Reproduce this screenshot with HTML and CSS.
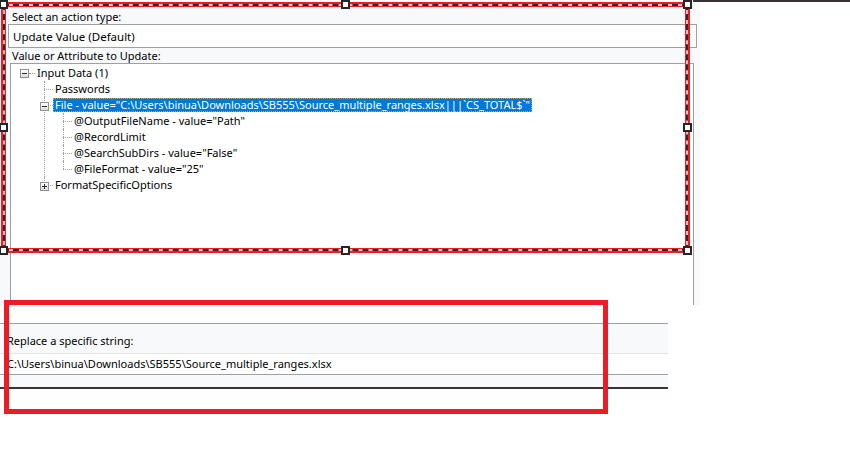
FILE: index.html
```html
<!DOCTYPE html>
<html lang="en">

<head>
    <meta charset="UTF-8">
    <meta name="viewport" content="width=device-width, initial-scale=1.0">
    <title>Update Value</title>
    <link rel="stylesheet" href="styles.css">
</head>

<body>
    <div class="strip"></div>

    <div class="panel">
        <div class="label">Select an action type:</div>
        <div class="combo">
            <span>Update Value (Default)</span>
            <svg class="combo-arrow" width="7" height="5" viewBox="0 0 7 5">
                <path d="M0.5 0.5 L3.5 3.5 L6.5 0.5" fill="none" stroke="#606060" stroke-width="1" />
            </svg>
        </div>
        <div class="label label-tree">Value or Attribute to Update:</div>
        <div class="tree">
            <div class="row root-row">
                <span class="expander minus"></span><span class="dots"></span><span class="node">Input Data (1)</span>
            </div>
            <ul class="branch level2">
                <li><span class="node">Passwords</span></li>
                <li>
                    <span class="expander minus"></span>
                    <span class="node selected">File - value="C:\Users\binua\Downloads\SB555\Source_multiple_ranges.xlsx|||`CS_TOTAL$`"</span>
                    <ul class="branch level3">
                        <li><span class="node">@OutputFileName - value="Path"</span></li>
                        <li><span class="node">@RecordLimit</span></li>
                        <li><span class="node">@SearchSubDirs - value="False"</span></li>
                        <li><span class="node">@FileFormat - value="25"</span></li>
                    </ul>
                </li>
                <li>
                    <span class="expander plus"></span>
                    <span class="node">FormatSpecificOptions</span>
                </li>
            </ul>
        </div>
    </div>

    <div class="replace">
        <div class="replace-head">Replace a specific string:</div>
        <div class="replace-value">C:\Users\binua\Downloads\SB555\Source_multiple_ranges.xlsx</div>
        <div class="replace-foot"></div>
    </div>

    <!-- marcas de anotación encima de la captura -->
    <div class="marquee"></div>
    <span class="handle" style="left: 3.5px; top: 4.5px"></span>
    <span class="handle" style="left: 345px; top: 4.5px"></span>
    <span class="handle" style="left: 687.5px; top: 4.5px"></span>
    <span class="handle" style="left: 3.5px; top: 127px"></span>
    <span class="handle" style="left: 687.5px; top: 127px"></span>
    <span class="handle" style="left: 3.5px; top: 250.5px"></span>
    <span class="handle" style="left: 345px; top: 250.5px"></span>
    <span class="handle" style="left: 687.5px; top: 250.5px"></span>
    <div class="red-box"></div>
</body>

</html>
```

FILE: styles.css
```css
body {
    margin: 0;
    background-color: #ffffff;
    font-family: "Segoe UI", "Noto Sans", sans-serif;
    font-size: 11px;
    color: #000000;
    position: relative;
    width: 850px;
    height: 474px;
    overflow: hidden;
}

.strip {
    height: 2px;
    margin-left: 693px;
    background-color: #3b3134;
}

.panel {
    width: 700px;
    height: 303px;
    box-sizing: border-box;
    padding: 8px 3px 0 8px;
    background-color: #f8f9fb;
    display: flex;
    flex-direction: column;
}

.label {
    line-height: 14px;
    padding-left: 4px;
}

.label-tree {
    line-height: 15px;
}

.combo {
    height: 24px;
    box-sizing: border-box;
    border: 1px solid #a0a0a0;
    background-color: #ffffff;
    display: flex;
    align-items: center;
    justify-content: space-between;
    padding: 0 5px 0 4px;
    font-size: 11.5px;
}

.tree {
    flex: 1;
    margin-left: 2px;
    width: 684px;
    box-sizing: border-box;
    border: 1px solid #a0a0a0;
    border-bottom: none;
    background-color: #ffffff;
    padding-top: 1px;
    line-height: 16px;
}

.row {
    display: flex;
    align-items: center;
    height: 16px;
}

.root-row .expander {
    position: relative;
    left: 0;
    top: 0;
    margin-left: 9px;
}

.dots {
    width: 6px;
    border-top: 1px dotted #a0a0a0;
}

.node {
    display: inline-block;
    vertical-align: top;
    line-height: 16px;
    padding: 0 2px;
    white-space: nowrap;
}

.node.selected {
    line-height: 14px;
    margin: 1px 0;
    background-color: #0078d7;
    color: #ffffff;
    outline: 1px dotted #f0a030;
    outline-offset: -1px;
}

.branch {
    list-style: none;
    margin: 0;
    padding: 0;
}

.level2 {
    margin-left: 33px;
}

.level3 {
    margin-left: 10px;
}

.branch li {
    position: relative;
    padding-left: 9px;
}

.branch li::before {
    content: "";
    position: absolute;
    left: 0;
    top: 0;
    bottom: 0;
    border-left: 1px dotted #a0a0a0;
}

.branch li:last-child::before {
    bottom: auto;
    height: 8px;
}

.branch li::after {
    content: "";
    position: absolute;
    left: 0;
    top: 8px;
    width: 9px;
    border-top: 1px dotted #a0a0a0;
}

.expander {
    position: absolute;
    left: -4px;
    top: 5px;
    z-index: 1;
    width: 9px;
    height: 9px;
    box-sizing: border-box;
    border: 1px solid #919191;
    background: linear-gradient(#ffffff, #dcdcdc);
}

.expander::before {
    content: "";
    position: absolute;
    left: 1px;
    top: 3px;
    width: 5px;
    height: 1px;
    background-color: #2a2a2a;
}

.expander.plus::after {
    content: "";
    position: absolute;
    left: 3px;
    top: 1px;
    width: 1px;
    height: 5px;
    background-color: #2a2a2a;
}

.replace {
    width: 668px;
    margin-top: 18px;
}

.replace-head {
    border-top: 1px solid #a0a0a4;
    border-bottom: 1px solid #e6e6ea;
    background-color: #f8f9fb;
    height: 31px;
    box-sizing: border-box;
    padding: 10px 0 0 7px;
    line-height: 14px;
}

.replace-value {
    height: 20px;
    line-height: 20px;
    padding-left: 7px;
    background-color: #ffffff;
}

.replace-foot {
    height: 12px;
    border-top: 1px solid #a0a0a4;
    border-bottom: 2px solid #3b3134;
    background-color: #f8f9fb;
}

.marquee {
    position: absolute;
    left: 1px;
    top: 2px;
    width: 689px;
    height: 251px;
    box-sizing: border-box;
    border: 2px solid #ee1c25;
}

.marquee::before {
    content: "";
    position: absolute;
    inset: 0;
    border: 2px solid #f7b5b8;
    box-shadow: inset 0 0 0 1px #ee1c25;
}

.marquee::after {
    content: "";
    position: absolute;
    inset: 0;
    border: 2px dashed #2b2b2b;
}

.handle {
    position: absolute;
    width: 9px;
    height: 9px;
    margin: -4.5px 0 0 -4.5px;
    box-sizing: border-box;
    border: 2px solid #262626;
    background-color: #ffffff;
}

.red-box {
    position: absolute;
    left: 4px;
    top: 300px;
    width: 604px;
    height: 114px;
    box-sizing: border-box;
    border: 5px solid #ed1c24;
}
```
